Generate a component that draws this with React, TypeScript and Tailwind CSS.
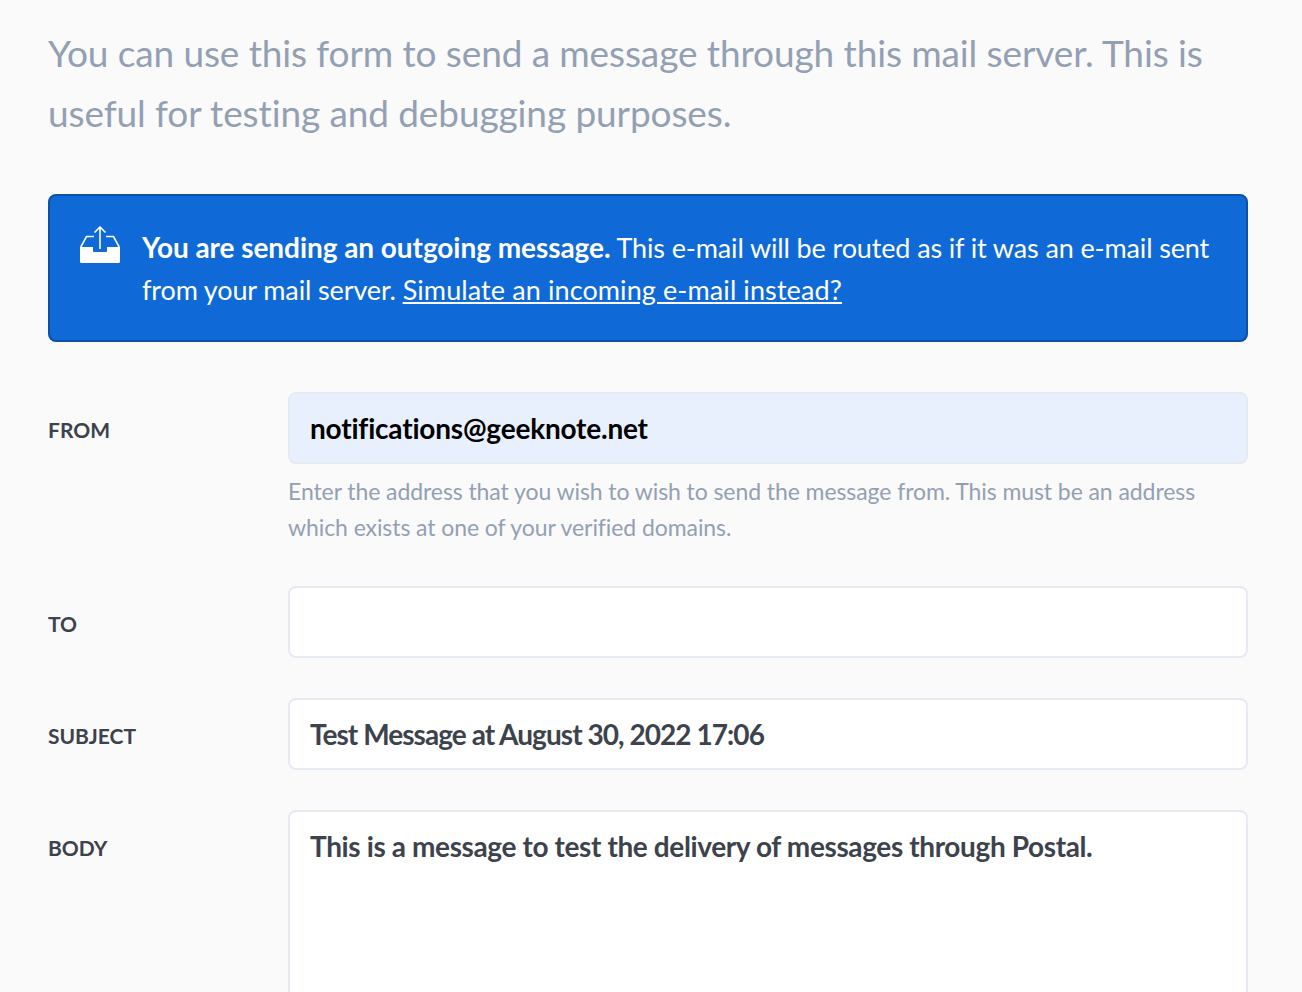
const font = "font-['Lato','Noto_Sans',sans-serif] [font-variant-ligatures:none]";

function Row({ label, children, className = "" }: { label: string; children: React.ReactNode; className?: string }) {
  return (
    <div className={`flex ${className}`}>
      <label className="w-[240px] shrink-0 pt-[23px] text-[21px] leading-[30px] font-bold text-[#3c434c]">{label}</label>
      <div className="min-w-0 flex-1">{children}</div>
    </div>
  );
}

const field = "block h-[72px] w-full rounded-[8px] border-2 border-[#e6ebf3] px-[20px] text-[28px] font-bold outline-none";

export default function App() {
  return (
    <div className={`h-[992px] overflow-hidden bg-[#fafafa] pl-[48px] pr-[54px] pt-[23px] ${font}`}>
      <p className="w-[1200px] text-[37px] leading-[60px] tracking-[-0.11px] text-[#93a0b4]">
        You can use this form to send a message through this mail server. This is useful for testing and debugging purposes.
      </p>

      <div className="mt-[51px] flex h-[148px] rounded-[8px] border-2 border-[#0c51a6] bg-[#0f69d7] pl-[30px] pt-[30px] text-[27px] leading-[42px] tracking-[-0.13px] text-white">
        <svg viewBox="0 0 40 38" className="h-[38px] w-[40px] shrink-0" fill="none">
          <path d="M20 1v22M14.500 6.500 20 1l5.500 5.500" stroke="#fff" strokeWidth="1.600" />
          <path d="M14 10.500H6.500L0.800 21M26 10.500h7.500L39.200 21" stroke="#fff" strokeWidth="1.600" />
          <path d="M0 21h13v4a1 1 0 0 0 1 1h12a1 1 0 0 0 1-1v-4h13v14.500a1.500 1.500 0 0 1-1.500 1.500h-37A1.500 1.500 0 0 1 0 35.500z" fill="#fff" />
        </svg>
        <p className="ml-[22px]">
          <strong className="text-[28px] font-bold tracking-[-0.06px]">You are sending an outgoing message.</strong> This e-mail will be routed as if it was an e-mail sent from your mail server.{" "}
          <a className="tracking-[0.1px] underline" href="#">Simulate an incoming e-mail instead?</a>
        </p>
      </div>

      <Row label="FROM" className="mt-[50px]">
        <input readOnly value="notifications@geeknote.net" className={`${field} bg-[#e8f0fe] tracking-[-0.2px] text-black`} />
        <p className="mt-[9px] text-[23px] leading-[36px] tracking-[-0.08px] text-[#93a0b4]">
          Enter the address that you wish to wish to send the message from. This must be an address which exists at one of your verified domains.
        </p>
      </Row>
      <Row label="TO" className="mt-[41px]">
        <input readOnly value="" className={`${field} bg-white text-[#3c434c]`} />
      </Row>
      <Row label="SUBJECT" className="mt-[40px]">
        <input readOnly value="Test Message at August 30, 2022 17:06" className={`${field} bg-white tracking-[-0.95px] text-[#3c434c]`} />
      </Row>
      <Row label="BODY" className="mt-[40px]">
        <textarea readOnly value="This is a message to test the delivery of messages through Postal." className="block h-[300px] w-full resize-none rounded-[8px] border-2 border-[#e6ebf3] bg-white px-[20px] py-[13px] text-[28px] leading-[42px] font-bold tracking-[-0.38px] text-[#3c434c] outline-none" />
      </Row>
    </div>
  );
}
